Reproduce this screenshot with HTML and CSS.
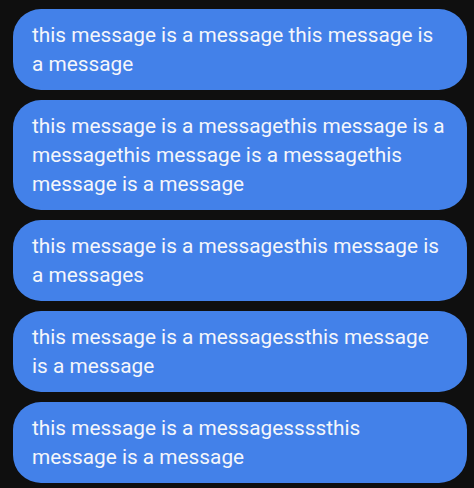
FILE: index.html
```html
<!DOCTYPE html>
<html>
<head>
<meta charset="utf-8">
<link rel="stylesheet" href="styles.css">
</head>
<body>
<div class="list">
  <div class="bubble">this message is a message this message is a message</div>
  <div class="bubble">this message is a messagethis message is a messagethis message is a messagethis message is a message</div>
  <div class="bubble">this message is a messagesthis message is a messages</div>
  <div class="bubble">this message is a messagessthis message is a message</div>
  <div class="bubble">this message is a messagessssthis message is a message</div>
</div>
</body>
</html>
```

FILE: styles.css
```css
html, body {
  margin: 0;
  padding: 0;
  background: #0f0f0f;
}
.list {
  display: flex;
  flex-direction: column;
  gap: 10px;
  padding: 9px 7px 0 13px;
}
.bubble {
  background: #4381e9;
  color: #f4f6fb;
  font-family: Roboto, "Noto Sans", sans-serif;
  font-size: 20.8px;
  line-height: 29px;
  padding: 11.5px 19px;
  border-radius: 28px;
}
```
